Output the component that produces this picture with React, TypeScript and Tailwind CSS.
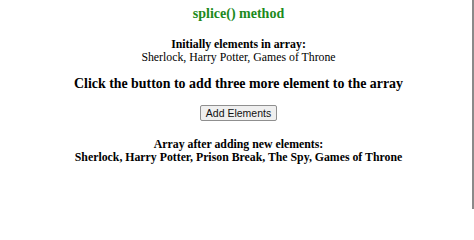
export default function App() {
  return (
    <div className="flex h-[209px] w-[474px] bg-white">
      <div
        className="flex flex-1 flex-col items-center pl-[5px] text-black"
        style={{ fontFamily: '"Liberation Serif", "Times New Roman", serif' }}
      >
        <h1 className="mt-[5px] text-[14px] font-bold leading-[17px] text-[#1c8a1c]">splice() method</h1>
        <p className="mt-[16px] text-[11.8px] font-bold leading-[13px]">Initially elements in array:</p>
        <p className="text-[11.8px] leading-[13px]">Sherlock, Harry Potter, Games of Throne</p>
        <p className="mt-[11px] text-[13.9px] font-bold leading-[17px]">
          Click the button to add three more element to the array
        </p>
        <button
          className="mt-[13px] h-[16px] rounded-[2px] border border-[#8f8f8f] bg-[#efefef] px-[5px] text-[10.5px] leading-[14px] text-[#111]"
          style={{ fontFamily: '"Liberation Sans", Arial, sans-serif' }}
        >
          Add Elements
        </button>
        <p className="mt-[17px] text-[11.8px] font-bold leading-[13px]">Array after adding new elements:</p>
        <p className="text-[11.8px] font-bold leading-[13px]">
          Sherlock, Harry Potter, Prison Break, The Spy, Games of Throne
        </p>
      </div>
      <div className="w-[2px] bg-[#8a8a8a]" />
    </div>
  )
}
